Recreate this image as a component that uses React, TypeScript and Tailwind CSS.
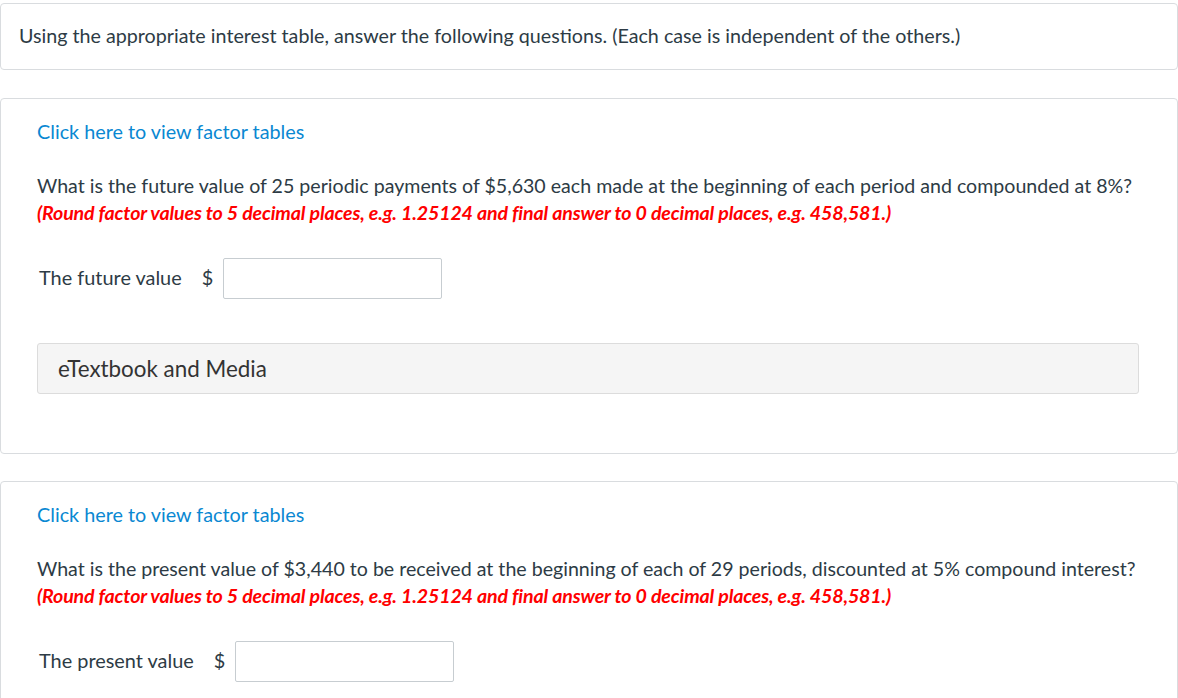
import { ReactNode } from "react";

const FONT = "font-['Lato','Liberation_Sans',sans-serif]";

function Card({ children, className = "" }: { children: ReactNode; className?: string }) {
  return (
    <div className={`bg-white border border-[#d9dcdf] rounded-[4px] ${className}`}>{children}</div>
  );
}

function Question({
  text,
  label,
  children,
}: {
  text: string;
  label: string;
  children?: ReactNode;
}) {
  return (
    <div className="pl-[36px] pr-[38px] pt-[19px]">
      <a className="text-[#0a88d2] text-[19.8px] leading-[27px] cursor-pointer">
        Click here to view factor tables
      </a>
      <p className="mt-[27px] text-[19.6px] leading-[27px] text-[#2d3b45]">
        {text}
        <br />
        <span className="text-[#ff0000] font-bold italic tracking-[-0.15px]">
          (Round factor values to 5 decimal places, e.g. 1.25124 and final answer to 0 decimal
          places, e.g. 458,581.)
        </span>
      </p>
      <div className="mt-[32px] flex items-center text-[19.9px] leading-[27px] text-[#2d3b45]">
        <span className="pl-[2px] pb-[2px]">{label}</span>
        <span className="ml-[20px] pb-[2px]">$</span>
        <div className="ml-[10px] w-[219px] h-[41px] border border-[#c7cdd1] rounded-[2px] bg-white" />
      </div>
      {children}
    </div>
  );
}

export default function App() {
  return (
    <div className={`${FONT} bg-white w-[1178px] h-[698px] overflow-hidden pt-[3px]`}>
      <Card className="h-[67px] flex items-center pl-[18px] pb-[2px]">
        <p className="text-[19.7px] text-[#2d3b45]">
          Using the appropriate interest table, answer the following questions. (Each case is
          independent of the others.)
        </p>
      </Card>

      <Card className="mt-[28px] h-[356px]">
        <Question
          text="What is the future value of 25 periodic payments of $5,630 each made at the beginning of each period and compounded at 8%?"
          label="The future value"
        >
          <div className="mt-[44px] h-[51px] bg-[#f5f5f5] border border-[#dcdcdc] rounded-[3px] flex items-center pl-[20px] text-[22.4px] text-[#333]">
            eTextbook and Media
          </div>
        </Question>
      </Card>

      <Card className="mt-[27px] h-[300px]">
        <Question
          text="What is the present value of $3,440 to be received at the beginning of each of 29 periods, discounted at 5% compound interest?"
          label="The present value"
        />
      </Card>
    </div>
  );
}
